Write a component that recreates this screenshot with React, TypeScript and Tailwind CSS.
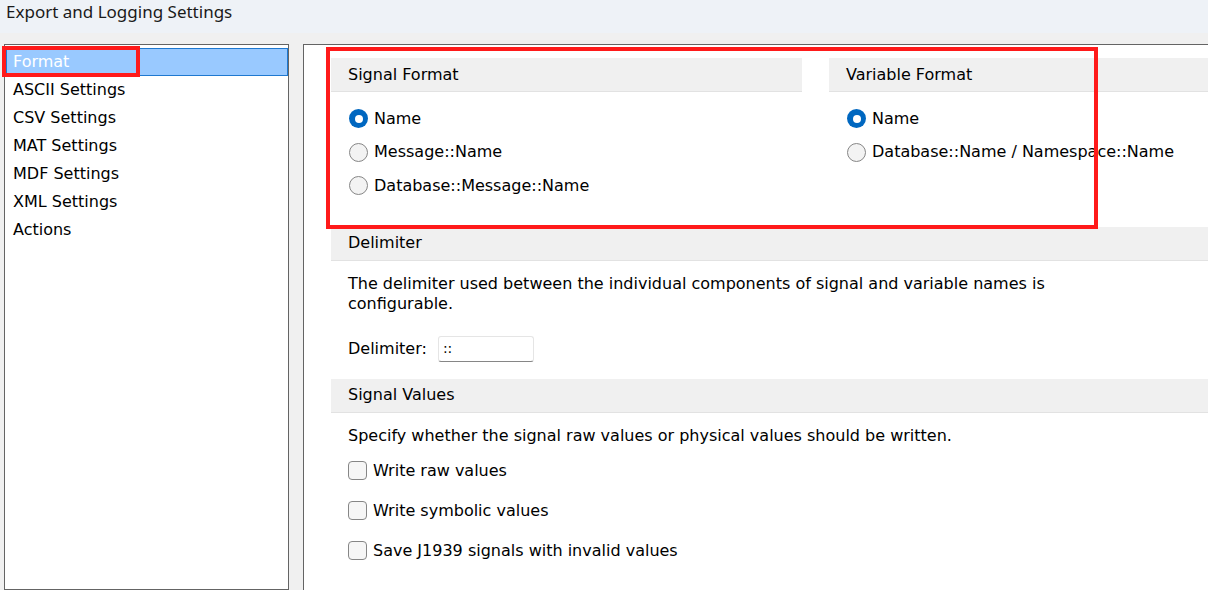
const listItems = [
  "Format",
  "ASCII Settings",
  "CSV Settings",
  "MAT Settings",
  "MDF Settings",
  "XML Settings",
  "Actions",
];

const Radio = ({ checked, label }: { checked?: boolean; label: string }) => (
  <div className="flex h-[33.5px] items-center gap-[6px]">
    {checked ? (
      <span className="flex h-[19px] w-[19px] items-center justify-center rounded-full bg-[#0067c0]">
        <span className="h-[8px] w-[8px] rounded-full bg-white" />
      </span>
    ) : (
      <span className="h-[19px] w-[19px] rounded-full border border-[#868686] bg-[#f3f3f3]" />
    )}
    <span>{label}</span>
  </div>
);

const Check = ({ label }: { label: string }) => (
  <div className="flex h-[40px] items-center gap-[6px]">
    <span className="h-[19px] w-[19px] rounded-[4px] border border-[#868686] bg-[#f6f6f6]" />
    <span>{label}</span>
  </div>
);

const Header = ({ title }: { title: string }) => (
  <div className="flex h-[34px] items-center border-b border-[#e2e2e2] bg-[#f0f0f0] pl-[17px]">
    {title}
  </div>
);

export default function App() {
  return (
    <div className="relative h-[590px] w-[1208px] overflow-hidden bg-[#f0f0f0] font-['DejaVu_Sans',sans-serif] text-[16px] text-black">
      <div className="flex h-[33px] items-start bg-[#eef2f7] pl-[6px] font-['Noto_Sans',sans-serif] text-[17px] leading-[24px] text-[#1a1a1a]">
        Export and Logging Settings
      </div>

      <div className="flex h-[557px] pl-[4px] pt-[11px]">
        <div className="w-[285px] border border-[#646464] bg-white pl-px pt-[3px]">
          {listItems.map((item, i) => (
            <div
              key={item}
              className={
                i === 0
                  ? "flex h-[28px] items-center border border-[#1e78d0] bg-[#99c9ff] pl-[6px] text-white"
                  : "flex h-[28px] items-center pl-[7px]"
              }
            >
              {item}
            </div>
          ))}
        </div>

        <div className="ml-[14px] flex-1 border-l border-t border-[#646464] bg-white pl-[27px] pt-[13px]">
          <div className="flex gap-[27px]">
            <div className="w-[471px]">
              <Header title="Signal Format" />
              <div className="pl-[18px] pt-[10px]">
                <Radio checked label="Name" />
                <Radio label="Message::Name" />
                <Radio label="Database::Message::Name" />
              </div>
            </div>
            <div className="flex-1">
              <Header title="Variable Format" />
              <div className="pl-[18px] pt-[10px]">
                <Radio checked label="Name" />
                <Radio label="Database::Name / Namespace::Name" />
              </div>
            </div>
          </div>

          <div className="mt-[24px]">
            <Header title="Delimiter" />
            <p className="w-[720px] pl-[17px] pt-[13px] leading-[20px]">
              The delimiter used between the individual components of signal and variable names is configurable.
            </p>
            <div className="flex items-center gap-[11px] pl-[17px] pt-[22px]">
              <span>Delimiter:</span>
              <div className="flex h-[26px] w-[96px] items-center rounded-[3px] border border-[#e5e5e5] border-b-[#868686] pl-[4px] text-[14px]">
                ::
              </div>
            </div>
          </div>

          <div className="mt-[17px]">
            <Header title="Signal Values" />
            <p className="pl-[17px] pt-[13px] leading-[20px]">
              Specify whether the signal raw values or physical values should be written.
            </p>
            <div className="pl-[17px] pt-[5px]">
              <Check label="Write raw values" />
              <Check label="Write symbolic values" />
              <Check label="Save J1939 signals with invalid values" />
            </div>
          </div>
        </div>
      </div>

      <div className="absolute left-[2px] top-[46px] h-[31px] w-[138px] border-[4px] border-[#ff1a1a]" />
      <div className="absolute left-[326px] top-[47px] h-[182px] w-[772px] border-[4px] border-[#ff1a1a]" />
    </div>
  );
}
